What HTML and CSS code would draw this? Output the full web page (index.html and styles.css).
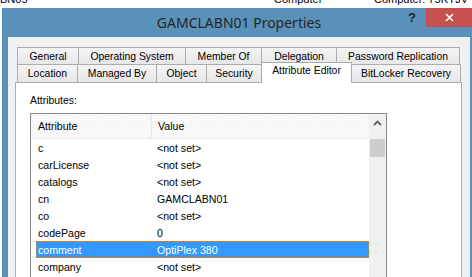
FILE: index.html
```html
<!DOCTYPE html>
<html>
<head>
<meta charset="utf-8">
<link rel="stylesheet" href="styles.css">
</head>
<body>
<div class="behind"><span>BN05</span><span>Computer</span><span>Computer: 75KYJV</span></div>
<div class="win">
  <div class="titlebar">
    <div></div>
    <div class="title">GAMCLABN01 Properties</div>
    <div class="ctrls">
      <span class="help">?</span>
      <span class="close"><svg width="9" height="9" viewBox="0 0 9 9"><path d="M1 1L8 8M8 1L1 8" stroke="#fff" stroke-width="1.6"/></svg></span>
    </div>
  </div>
  <div class="client">
    <div class="tabs">
      <div class="tabrow r1">
        <div class="tab">General</div>
        <div class="tab">Operating System</div>
        <div class="tab">Member Of</div>
        <div class="tab">Delegation</div>
        <div class="tab">Password Replication</div>
      </div>
      <div class="tabrow r2">
        <div class="tab">Location</div>
        <div class="tab">Managed By</div>
        <div class="tab">Object</div>
        <div class="tab">Security</div>
        <div class="tab sel">Attribute Editor</div>
        <div class="tab">BitLocker Recovery</div>
      </div>
    </div>
    <div class="panel">
      <div class="label">Attributes:</div>
      <div class="list">
        <div class="main">
          <div class="lhead"><div class="c1">Attribute</div><div class="c2">Value</div></div>
          <div class="rows">
            <div class="row"><div class="c1">c</div><div class="c2">&lt;not set&gt;</div></div>
            <div class="row"><div class="c1">carLicense</div><div class="c2">&lt;not set&gt;</div></div>
            <div class="row"><div class="c1">catalogs</div><div class="c2">&lt;not set&gt;</div></div>
            <div class="row"><div class="c1">cn</div><div class="c2">GAMCLABN01</div></div>
            <div class="row"><div class="c1">co</div><div class="c2">&lt;not set&gt;</div></div>
            <div class="row"><div class="c1">codePage</div><div class="c2">0</div></div>
            <div class="row sel"><div class="c1">comment</div><div class="c2">OptiPlex 380</div></div>
            <div class="row"><div class="c1">company</div><div class="c2">&lt;not set&gt;</div></div>
          </div>
        </div>
        <div class="scroll">
          <div class="up"><svg width="9" height="6" viewBox="0 0 9 6"><path d="M1 5L4.5 1.5L8 5" fill="none" stroke="#606060" stroke-width="1.8"/></svg></div>
          <div class="thumb"></div>
        </div>
      </div>
    </div>
  </div>
</div>
</body>
</html>
```
FILE: styles.css
```css
html, body {
  margin: 0;
  padding: 0;
}
body {
  width: 472px;
  height: 277px;
  overflow: hidden;
  background: #fff;
  position: relative;
  font-family: "Liberation Sans", Arial, sans-serif;
  color: #000;
}
.behind {
  display: grid;
  grid-template-columns: 274px 100px auto;
  margin-top: -7px;
  font-size: 11px;
  line-height: 13px;
  white-space: nowrap;
}
.win {
  position: absolute;
  left: 2px;
  top: 8px;
  width: 474px;
  height: 290px;
  background: #5a91ba;
  display: flex;
  flex-direction: column;
}
.titlebar {
  height: 29px;
  display: grid;
  grid-template-columns: 1fr auto 1fr;
}
.title {
  font-family: "Noto Sans", "Open Sans", sans-serif;
  font-size: 14px;
  line-height: 29px;
  color: #262626;
  white-space: nowrap;
}
.ctrls {
  justify-self: end;
  display: flex;
  align-items: flex-start;
  margin-right: 4px;
}
.help {
  width: 28px;
  height: 19px;
  line-height: 19px;
  text-align: center;
  font-weight: bold;
  font-size: 13px;
  color: #222;
}
.close {
  width: 46px;
  height: 19px;
  background: #c75050;
  display: flex;
  align-items: center;
  justify-content: center;
}
.client {
  flex: 1;
  margin: 0 6px;
  background: #f0f0f0;
  padding: 10px 8px 0 7px;
  display: flex;
  flex-direction: column;
}
.tabs {
  padding-left: 2px;
}
.tabrow {
  display: grid;
  font-size: 10.4px;
}
.r1 {
  grid-template-columns: 62px 107px 76px 75px 123px;
  height: 17px;
}
.r2 {
  grid-template-columns: 61px 79px 50px 55px 90px 109px;
  height: 18px;
}
.tab {
  border-top: 1px solid #acacac;
  border-right: 1px solid #acacac;
  background: linear-gradient(#f4f4f4, #e7e7e7);
  display: flex;
  align-items: center;
  justify-content: center;
  white-space: nowrap;
}
.tab:first-child {
  border-left: 1px solid #acacac;
}
.tab.sel {
  background: #fff;
  margin: -2px 0 -1px -1px;
  border-left: 1px solid #acacac;
  position: relative;
  z-index: 1;
  align-items: flex-start;
  padding-top: 2px;
}
.panel {
  flex: 1;
  background: #fff;
  border: 1px solid #acacac;
  padding: 10px 0 0 14px;
}
.label {
  font-size: 10.4px;
  line-height: 16px;
  margin-bottom: 4px;
}
.list {
  width: 357px;
  height: 200px;
  box-sizing: border-box;
  border: 1px solid #828790;
  display: flex;
  font-size: 10.6px;
}
.main {
  flex: 1;
}
.lhead {
  height: 24px;
  border-bottom: 1px solid #e3eaf4;
  background-color: #f9f9f9;
  background-image: radial-gradient(#eeeeee 0.7px, transparent 0.8px);
  background-size: 3px 3px;
  display: flex;
}
.lhead .c1 {
  width: 121px;
  box-sizing: border-box;
  padding-left: 7px;
  border-right: 1px solid #e5e5e5;
  display: flex;
  align-items: center;
}
.lhead .c2 {
  padding-left: 6px;
  display: flex;
  align-items: center;
}
.rows {
  padding-left: 5px;
}
.row {
  display: flex;
  height: 17px;
  align-items: center;
  white-space: nowrap;
}
.row .c1 {
  width: 121px;
  box-sizing: border-box;
  padding-left: 2px;
}
.row.sel {
  background: #3399ff;
  color: #fff;
  outline: 1px dotted #d9822b;
  outline-offset: -1px;
}
.scroll {
  width: 17px;
  background: #f0f0f0;
  display: flex;
  flex-direction: column;
  align-items: center;
}
.up {
  width: 100%;
  height: 17px;
  display: flex;
  align-items: center;
  justify-content: center;
}
.thumb {
  margin-top: 8px;
  width: 15px;
  height: 18px;
  background: #cdcdcd;
}
```
